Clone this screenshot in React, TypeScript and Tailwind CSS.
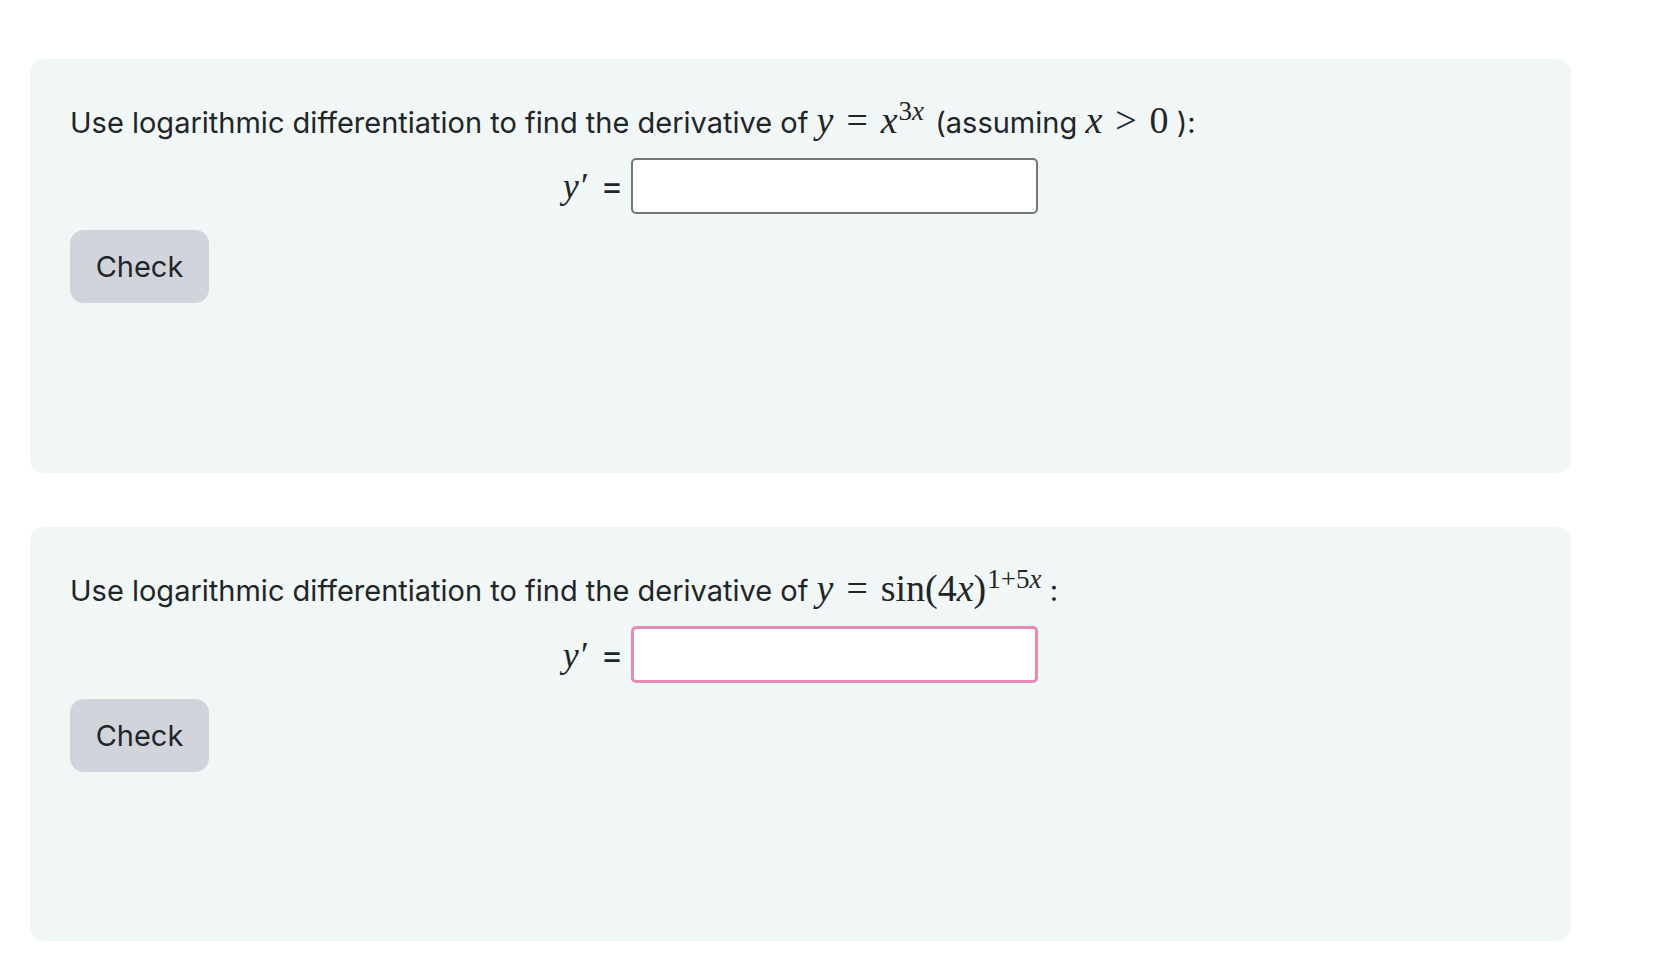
import React from "react";

const serif = "font-['Liberation_Serif',serif]";

const Var = ({ children }: { children: React.ReactNode }) => (
  <span className={`${serif} italic`}>{children}</span>
);

const Rel = ({ children }: { children: React.ReactNode }) => (
  <span className={`${serif} mx-[0.34em]`}>{children}</span>
);

type CardProps = {
  question: React.ReactNode;
  invalid?: boolean;
};

const QuestionCard = ({ question, invalid }: CardProps) => {
  return (
    <div className="h-[414px] rounded-[14px] bg-[#f1f6f6] px-[40px] pt-[41px]">
      <p className="h-[43px] leading-[42px] whitespace-nowrap">{question}</p>
      <div className="mt-[15px] flex items-center justify-center">
        <span className={`${serif} italic text-[36px] leading-none`}>y′</span>
        <span className="ml-[14px] mr-[8px] text-[34px] leading-none">=</span>
        <input
          type="text"
          className={
            invalid
              ? "h-[57px] w-[407px] rounded-[5px] border-[3px] border-[#e78bb5] bg-white outline-none"
              : "h-[56px] w-[407px] rounded-[5px] border-2 border-[#767676] bg-white outline-none"
          }
        />
      </div>
      <button className="mt-[16px] h-[73px] w-[139px] rounded-[14px] bg-[#d1d5db] text-[29px] text-[#212529]">
        Check
      </button>
    </div>
  );
};

export default function App() {
  return (
    <div className="min-h-screen w-[1656px] bg-white pt-[59px] pl-[30px] font-['Inter','Liberation_Sans',sans-serif] text-[29px] text-[#1f2628]">
      <div className="flex w-[1541px] flex-col gap-[54px]">
        <QuestionCard
          question={
            <>
              Use logarithmic differentiation to find the derivative of{" "}
              <span className="text-[38px] leading-none">
                <Var>y</Var>
                <Rel>=</Rel>
                <Var>x</Var>
                <sup className="ml-[1px] mr-[3px] text-[27px]">
                  <span className={serif}>3</span>
                  <Var>x</Var>
                </sup>
              </span>{" "}
              (assuming{" "}
              <span className="text-[38px] leading-none">
                <Var>x</Var>
                <Rel>&gt;</Rel>
                <span className={serif}>0</span>
              </span>{" "}
              ):
            </>
          }
        />
        <QuestionCard
          invalid
          question={
            <>
              Use logarithmic differentiation to find the derivative of{" "}
              <span className="text-[38px] leading-none">
                <Var>y</Var>
                <Rel>=</Rel>
                <span className={serif}>sin(4</span>
                <Var>x</Var>
                <span className={serif}>)</span>
                <sup className="ml-[1px] text-[27px]">
                  <span className={serif}>1+5</span>
                  <Var>x</Var>
                </sup>
              </span>{" "}
              :
            </>
          }
        />
      </div>
    </div>
  );
}
